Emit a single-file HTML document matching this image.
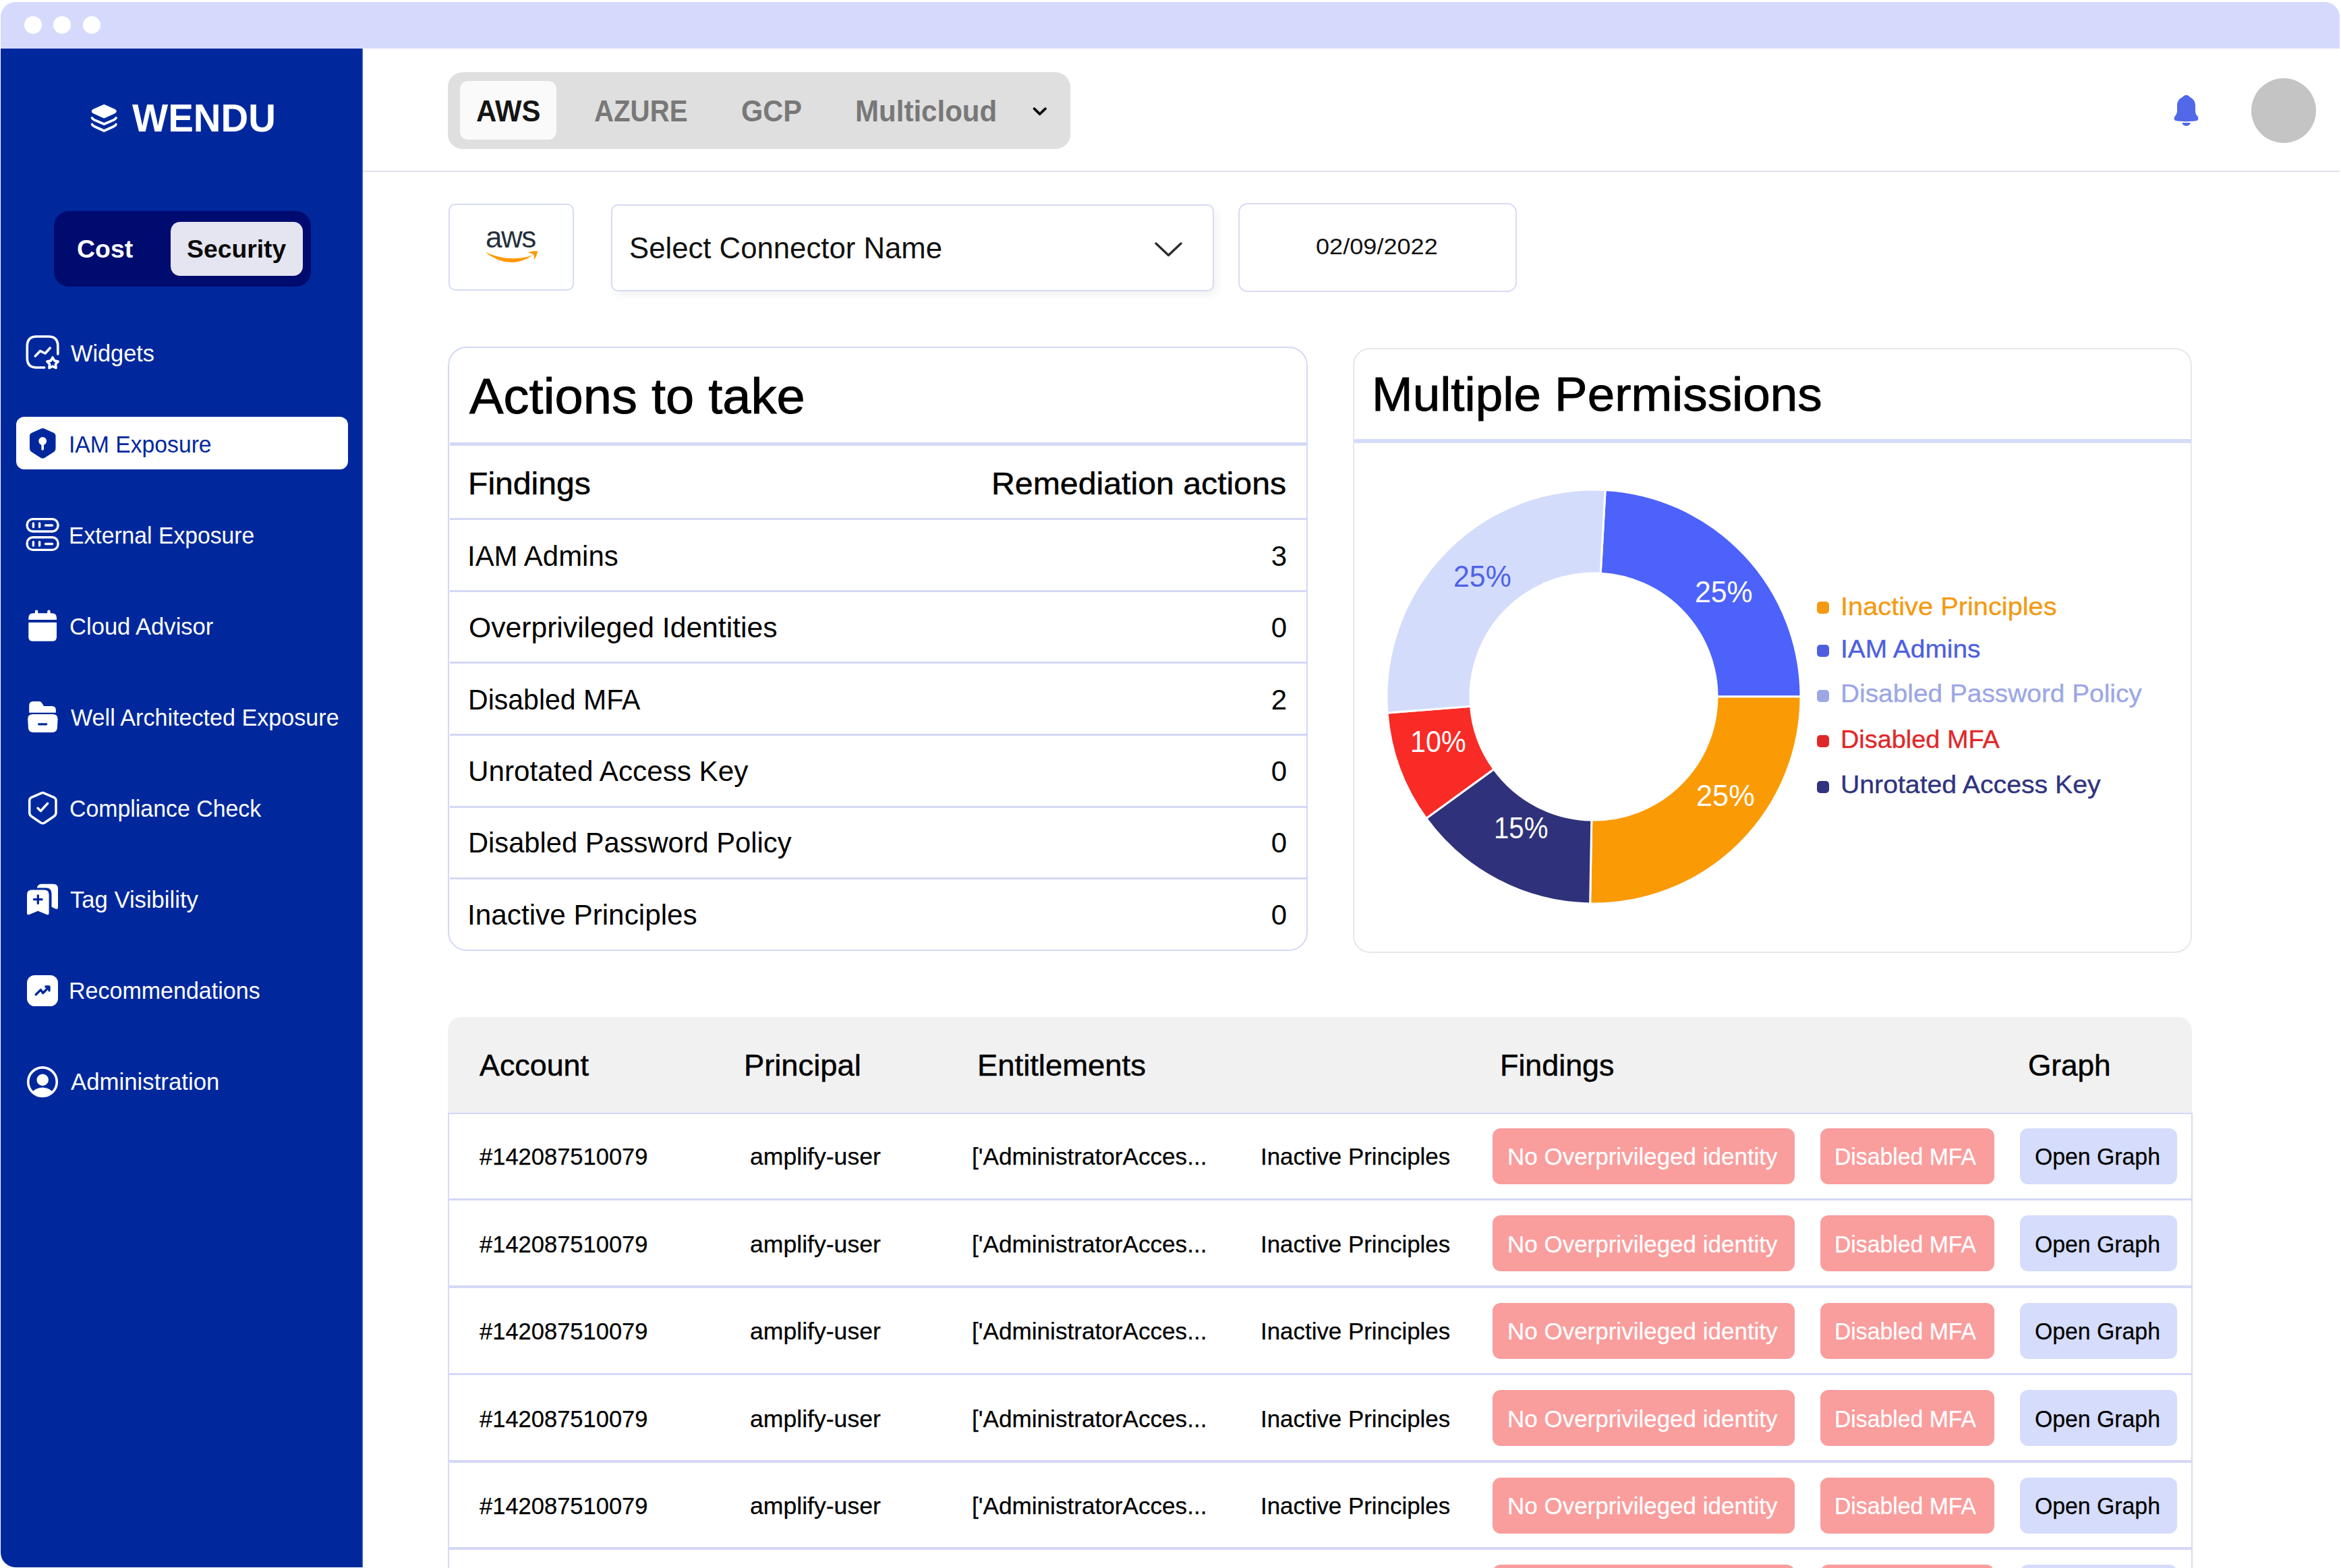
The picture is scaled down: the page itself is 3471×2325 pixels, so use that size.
<!DOCTYPE html>
<html><head><meta charset="utf-8"><title>Wendu IAM Exposure</title>
<style>
html,body{margin:0;padding:0;background:#fff;}
body{width:3471px;height:2325px;position:relative;overflow:hidden;font-family:"Liberation Sans", sans-serif;}
</style></head><body>
<div style="position:absolute;left:1px;top:3px;width:3468px;height:69px;background:#D5DAFD;border-radius:22px 22px 0 0;"></div>
<div style="position:absolute;left:36px;top:24px;width:26px;height:26px;border-radius:50%;background:#fff"></div>
<div style="position:absolute;left:79px;top:24px;width:26px;height:26px;border-radius:50%;background:#fff"></div>
<div style="position:absolute;left:123px;top:24px;width:26px;height:26px;border-radius:50%;background:#fff"></div>
<div style="position:absolute;left:1px;top:72px;width:537px;height:2252px;background:#00289C;border-radius:0 0 0 22px;box-shadow: inset -1.5px 0 0 #3A58B8;"></div>
<svg style="position:absolute;left:0;top:0" width="200" height="210" viewBox="0 0 200 210"><path d="M154.3 156.5 L169.5 163.2 Q172.8 165 169.5 166.8 L154.3 173.6 L139 166.8 Q135.8 165 139 163.2 Z" fill="#fff" stroke="#fff" stroke-width="3.4" stroke-linejoin="round"/><path d="M136.5 174.8 Q137.5 176.5 140 177.8 L154.3 184 L168.6 177.8 Q171 176.5 172 174.8" fill="none" stroke="#fff" stroke-width="3.6" stroke-linecap="round" stroke-linejoin="round"/><path d="M136.5 184.5 Q137.5 186.2 140 187.5 L154.3 194 L168.6 187.5 Q171 186.2 172 184.5" fill="none" stroke="#fff" stroke-width="3.6" stroke-linecap="round" stroke-linejoin="round"/></svg>
<div style="position:absolute;left:195.54px;top:146.00px;font-size:58px;line-height:58px;font-weight:bold;color:#fff;white-space:nowrap;transform:scaleX(0.9718);transform-origin:0 0;">WENDU</div>
<div style="position:absolute;left:80px;top:313px;width:381px;height:112px;background:#000B6F;border-radius:22px;"></div>
<div style="position:absolute;left:253px;top:329px;width:196px;height:80px;background:#E4E5F0;border-radius:14px;"></div>
<div style="position:absolute;left:114.07px;top:351.56px;font-size:36.2px;line-height:36.2px;font-weight:bold;color:#fff;white-space:nowrap;transform:scaleX(1.0342);transform-origin:0 0;">Cost</div>
<div style="position:absolute;left:276.92px;top:351.56px;font-size:36.2px;line-height:36.2px;font-weight:bold;color:#0A0A0A;white-space:nowrap;transform:scaleX(1.0310);transform-origin:0 0;">Security</div>
<div style="position:absolute;left:24px;top:618px;width:492px;height:78px;background:#fff;border-radius:12px;"></div>
<div style="position:absolute;left:104.83px;top:505.77px;font-size:35.0px;line-height:35.0px;font-weight:normal;color:#fff;white-space:nowrap;transform:scaleX(0.9809);transform-origin:0 0;">Widgets</div>
<div style="position:absolute;left:101.90px;top:640.77px;font-size:35.0px;line-height:35.0px;font-weight:normal;color:#00289C;white-space:nowrap;transform:scaleX(0.9626);transform-origin:0 0;">IAM Exposure</div>
<div style="position:absolute;left:102.24px;top:775.77px;font-size:35.0px;line-height:35.0px;font-weight:normal;color:#fff;white-space:nowrap;transform:scaleX(0.9624);transform-origin:0 0;">External Exposure</div>
<div style="position:absolute;left:103.24px;top:910.77px;font-size:35.0px;line-height:35.0px;font-weight:normal;color:#fff;white-space:nowrap;transform:scaleX(0.9880);transform-origin:0 0;">Cloud Advisor</div>
<div style="position:absolute;left:104.83px;top:1045.77px;font-size:35.0px;line-height:35.0px;font-weight:normal;color:#fff;white-space:nowrap;transform:scaleX(0.9749);transform-origin:0 0;">Well Architected Exposure</div>
<div style="position:absolute;left:103.27px;top:1180.77px;font-size:35.0px;line-height:35.0px;font-weight:normal;color:#fff;white-space:nowrap;transform:scaleX(0.9674);transform-origin:0 0;">Compliance Check</div>
<div style="position:absolute;left:104.24px;top:1315.77px;font-size:35.0px;line-height:35.0px;font-weight:normal;color:#fff;white-space:nowrap;transform:scaleX(0.9890);transform-origin:0 0;">Tag Visibility</div>
<div style="position:absolute;left:102.21px;top:1450.77px;font-size:35.0px;line-height:35.0px;font-weight:normal;color:#fff;white-space:nowrap;transform:scaleX(0.9720);transform-origin:0 0;">Recommendations</div>
<div style="position:absolute;left:104.93px;top:1585.77px;font-size:35.0px;line-height:35.0px;font-weight:normal;color:#fff;white-space:nowrap;transform:scaleX(0.9936);transform-origin:0 0;">Administration</div>
<svg style="position:absolute;left:0;top:0" width="540" height="1700" viewBox="0 0 540 1700">
<g fill="none" stroke="#fff" stroke-width="3.6" stroke-linecap="round" stroke-linejoin="round">
 <path d="M85.8 525 V513 Q85.8 499 71.8 499 H54.3 Q40.3 499 40.3 513 V531 Q40.3 545 54.3 545 H65.7"/>
 <path d="M52.3 528 L59.5 520.4 L67 524 L74.2 516"/>
 <path d="M78.00 530.00 L80.70 534.88 L86.18 535.94 L82.37 540.02 L83.05 545.56 L78.00 543.20 L72.95 545.56 L73.63 540.02 L69.82 535.94 L75.30 534.88 Z"/>
</g>
<path d="M63.3 635 Q64.5 635 66 635.8 L80 642 Q82.5 643.5 82.5 646 V665 Q82.5 668 80 670 L66 679 Q63.3 680.5 60.6 679 L46.6 670 Q44 668 44 665 V646 Q44 643.5 46.6 642 L60.6 635.8 Q62 635 63.3 635 Z" fill="#00289C"/>
<circle cx="63.2" cy="654" r="5.9" fill="#fff"/>
<path d="M63.2 657 V666" stroke="#fff" stroke-width="3.6" stroke-linecap="round"/>
<g fill="none" stroke="#fff" stroke-width="3.4" stroke-linecap="round">
 <rect x="40.2" y="769.6" width="45.8" height="18.4" rx="8.5"/>
 <rect x="40.2" y="796.8" width="45.8" height="18.6" rx="8.5"/>
 <path d="M49.4 776 V781.5 M58.6 776 V781.5 M67.5 779 H77.5"/>
 <path d="M49.4 803.5 V809 M58.6 803.5 V809 M67.5 806.5 H77.5"/>
</g>
<path d="M42.3 919 V916.3 Q42.3 909.3 49.3 909.3 H77 Q84 909.3 84 916.3 V919 Z" fill="#fff"/><rect x="51.9" y="904.6" width="4.4" height="8" rx="2.2" fill="#fff"/><rect x="70.2" y="904.6" width="4.4" height="8" rx="2.2" fill="#fff"/>
<path d="M42.3 923 H84 V944.5 Q84 950.8 77.7 950.8 H48.6 Q42.3 950.8 42.3 944.5 Z" fill="#fff"/>
<path d="M43.2 1056.8 V1046 Q43.2 1040 49.2 1040 H58 Q60.5 1040 62 1042.3 L65 1047 H77 Q82.9 1047 82.9 1053 V1056.8 Z" fill="#fff"/>
<path d="M48.5 1059 H78.3 Q85.6 1059 85.6 1066.3 L84.9 1079 Q84.5 1086 77.5 1086 H49.3 Q42.3 1086 41.9 1079 L41.2 1066.3 Q41.2 1059 48.5 1059 Z" fill="#fff"/>
<path d="M57.6 1073.8 H68.7" stroke="#00289C" stroke-width="3.2" stroke-linecap="round"/>
<g fill="none" stroke="#fff" stroke-width="3.5" stroke-linecap="round" stroke-linejoin="round">
 <path d="M63.3 1175.5 Q64.5 1175.5 66 1176.3 L80 1182.3 Q83 1184 83 1187 V1205 Q83 1208.5 80 1210.5 L66 1220 Q63.3 1221.6 60.6 1220 L46.6 1210.5 Q43.7 1208.5 43.7 1205 V1187 Q43.7 1184 46.6 1182.3 L60.6 1176.3 Q62 1175.5 63.3 1175.5 Z"/>
 <path d="M56 1198.3 L60.4 1202.5 L70.6 1191.3"/>
</g>
<path d="M54.8 1316.5 Q56 1310.7 62 1310.7 H79 Q86 1310.7 86 1317.7 V1345 Q86 1349 82 1347.5 L76.5 1344.7 V1325 Q76.5 1316.5 68 1316.5 Z" fill="#fff"/>
<path d="M47 1319.6 H65.6 Q72.6 1319.6 72.6 1326.6 V1353.5 Q72.6 1357.5 69 1356 L56.3 1350.7 L43.6 1356 Q40 1357.5 40 1353.5 V1326.6 Q40 1319.6 47 1319.6 Z" fill="#fff"/>
<path d="M56.3 1327.8 V1339.6 M50.4 1333.7 H62.2" stroke="#00289C" stroke-width="3.3" stroke-linecap="round"/>
<rect x="40" y="1446" width="46" height="46" rx="11.5" fill="#fff"/>
<path d="M53.2 1474.7 L60.4 1467.6 L63.7 1472.5 L72.9 1463 M67.8 1463 H73 V1468.8" fill="none" stroke="#00289C" stroke-width="3.4" stroke-linecap="round" stroke-linejoin="round"/>
<circle cx="63" cy="1604.2" r="21.3" fill="none" stroke="#fff" stroke-width="3.6"/>
<circle cx="63.2" cy="1601.2" r="8.7" fill="#fff"/>
<clipPath id="admclip"><circle cx="63" cy="1604.2" r="20"/></clipPath>
<circle cx="63" cy="1632.6" r="20.2" fill="#fff" clip-path="url(#admclip)"/>
</svg>
<div style="position:absolute;left:538px;top:253.2px;width:2931px;height:1.6000000000000227px;background:#E2E3F3;border-radius:0;"></div>
<div style="position:absolute;left:664px;top:107px;width:923px;height:114px;background:#DFDFDF;border-radius:22px;"></div>
<div style="position:absolute;left:682px;top:120px;width:143px;height:87px;background:#FAFAFA;border-radius:12px;"></div>
<div style="position:absolute;left:706.15px;top:142.88px;font-size:44.2px;line-height:44.2px;font-weight:bold;color:#151515;white-space:nowrap;transform:scaleX(0.9483);transform-origin:0 0;">AWS</div>
<div style="position:absolute;left:880.99px;top:142.88px;font-size:44.2px;line-height:44.2px;font-weight:bold;color:#787878;white-space:nowrap;transform:scaleX(0.9103);transform-origin:0 0;">AZURE</div>
<div style="position:absolute;left:1099.29px;top:142.88px;font-size:44.2px;line-height:44.2px;font-weight:bold;color:#787878;white-space:nowrap;transform:scaleX(0.9409);transform-origin:0 0;">GCP</div>
<div style="position:absolute;left:1268.18px;top:142.88px;font-size:44.2px;line-height:44.2px;font-weight:bold;color:#787878;white-space:nowrap;transform:scaleX(0.9518);transform-origin:0 0;">Multicloud</div>
<svg style="position:absolute;left:1525px;top:150px" width="32" height="30" viewBox="0 0 32 30"><path d="M8.5 11.2 L16.7 19.2 L25 11.2" fill="none" stroke="#0A0A0A" stroke-width="3.8" stroke-linecap="round" stroke-linejoin="round"/></svg>
<svg style="position:absolute;left:3220px;top:138px" width="44" height="52" viewBox="0 0 44 52"><path d="M21.6 3 C24.5 3 25.5 4.5 26.5 5.5 C32 8.5 35 12 35 19 V27 C35 30 36.5 32 38 34 C40 36.5 40 40 37 41 C30 42.5 13 42.5 6 41 C3 40 3 36.5 5 34 C6.5 32 8 30 8 27 V19 C8 12 11 8.5 16.5 5.5 C17.5 4.5 18.5 3 21.6 3 Z" fill="#5168E8"/><path d="M15.3 44 H28 C27 47.5 24.5 48.8 21.6 48.8 C18.7 48.8 16.3 47.5 15.3 44 Z" fill="#5168E8"/></svg>
<div style="position:absolute;left:3338px;top:116px;width:96px;height:96px;border-radius:50%;background:#C4C4C4"></div>
<div style="position:absolute;left:665px;top:302px;width:182px;height:125px;border:2px solid #D6DBF6;border-radius:10px;background:#fff"></div>
<div style="position:absolute;left:720px;top:329.9px;font-size:44px;line-height:44px;font-weight:normal;color:#252F3E;white-space:nowrap;letter-spacing:-1.5px;">aws</div>
<svg style="position:absolute;left:0;top:0" width="820" height="400" viewBox="0 0 820 400"><path d="M719 373.4 Q754.5 402 790 378.5 Q754.5 390 719 373.4 Z" fill="#FF9900"/><path d="M783 374.2 Q791 371.5 797.2 372.4 Q796 380 791.4 385.8 Q793 379 790.5 377 Q787 375.3 783 374.2 Z" fill="#FF9900"/></svg>
<div style="position:absolute;left:906px;top:303px;width:890px;height:125px;border:2px solid #D6DBF6;border-radius:10px;background:#fff;box-shadow:4px 6px 14px rgba(0,0,0,0.06)"></div>
<div style="position:absolute;left:932.89px;top:347.28px;font-size:43.5px;line-height:43.5px;font-weight:normal;color:#111;white-space:nowrap;transform:scaleX(1.0048);transform-origin:0 0;">Select Connector Name</div>
<svg style="position:absolute;left:1705px;top:352px" width="56" height="36" viewBox="0 0 56 36"><path d="M9 9 L27.5 26.5 L46 9" fill="none" stroke="#2C2C2C" stroke-width="3.4" stroke-linecap="round" stroke-linejoin="round"/></svg>
<div style="position:absolute;left:1836px;top:301px;width:409px;height:128px;border:2px solid #D9DAF8;border-radius:14px;background:#fff"></div>
<div style="position:absolute;left:1950.99px;top:349.10px;font-size:33.9px;line-height:33.9px;font-weight:normal;color:#111;white-space:nowrap;transform:scaleX(1.0657);transform-origin:0 0;">02/09/2022</div>
<div style="position:absolute;left:664px;top:514px;width:1271px;height:891.5px;border:2.5px solid #D2D8F5;border-radius:28px;background:#fff"></div>
<div style="position:absolute;left:666.5px;top:656px;width:1270.5px;height:5px;background:#D3D8F5;border-radius:0;"></div>
<div style="position:absolute;left:696.11px;top:550.91px;font-size:73.7px;line-height:73.7px;font-weight:normal;color:#000;white-space:nowrap;transform:scaleX(1.0297);transform-origin:0 0;-webkit-text-stroke:0.9px #000;">Actions to take</div>
<div style="position:absolute;left:693.61px;top:692.53px;font-size:47.1px;line-height:47.1px;font-weight:normal;color:#000;white-space:nowrap;transform:scaleX(1.0215);transform-origin:0 0;-webkit-text-stroke:0.5px #000;">Findings</div>
<div style="position:absolute;left:1470.30px;top:692.53px;font-size:47.1px;line-height:47.1px;font-weight:normal;color:#000;white-space:nowrap;transform:scaleX(1.0244);transform-origin:0 0;-webkit-text-stroke:0.5px #000;">Remediation actions</div>
<div style="position:absolute;left:666.5px;top:768px;width:1270.5px;height:2.5px;background:#D3D8F5;border-radius:0;"></div>
<div style="position:absolute;left:666.5px;top:875px;width:1270.5px;height:2.5px;background:#D3D8F5;border-radius:0;"></div>
<div style="position:absolute;left:666.5px;top:981px;width:1270.5px;height:2.5px;background:#D3D8F5;border-radius:0;"></div>
<div style="position:absolute;left:666.5px;top:1088px;width:1270.5px;height:2.5px;background:#D3D8F5;border-radius:0;"></div>
<div style="position:absolute;left:666.5px;top:1195px;width:1270.5px;height:2.5px;background:#D3D8F5;border-radius:0;"></div>
<div style="position:absolute;left:666.5px;top:1301px;width:1270.5px;height:2.5px;background:#D3D8F5;border-radius:0;"></div>
<div style="position:absolute;left:693.44px;top:803.85px;font-size:42.0px;line-height:42.0px;font-weight:normal;color:#000;white-space:nowrap;transform:scaleX(0.9982);transform-origin:0 0;">IAM Admins</div>
<div style="position:absolute;right:1563px;top:803.8px;font-size:42.0px;line-height:42.0px;font-weight:normal;color:#000;white-space:nowrap;">3</div>
<div style="position:absolute;left:695.00px;top:910.25px;font-size:42.0px;line-height:42.0px;font-weight:normal;color:#000;white-space:nowrap;transform:scaleX(1.0155);transform-origin:0 0;">Overprivileged Identities</div>
<div style="position:absolute;right:1563px;top:910.2px;font-size:42.0px;line-height:42.0px;font-weight:normal;color:#000;white-space:nowrap;">0</div>
<div style="position:absolute;left:693.64px;top:1016.65px;font-size:42.0px;line-height:42.0px;font-weight:normal;color:#000;white-space:nowrap;transform:scaleX(0.9770);transform-origin:0 0;">Disabled MFA</div>
<div style="position:absolute;right:1563px;top:1016.6px;font-size:42.0px;line-height:42.0px;font-weight:normal;color:#000;white-space:nowrap;">2</div>
<div style="position:absolute;left:693.75px;top:1123.05px;font-size:42.0px;line-height:42.0px;font-weight:normal;color:#000;white-space:nowrap;transform:scaleX(1.0052);transform-origin:0 0;">Unrotated Access Key</div>
<div style="position:absolute;right:1563px;top:1123.0px;font-size:42.0px;line-height:42.0px;font-weight:normal;color:#000;white-space:nowrap;">0</div>
<div style="position:absolute;left:693.58px;top:1229.45px;font-size:42.0px;line-height:42.0px;font-weight:normal;color:#000;white-space:nowrap;transform:scaleX(0.9923);transform-origin:0 0;">Disabled Password Policy</div>
<div style="position:absolute;right:1563px;top:1229.4px;font-size:42.0px;line-height:42.0px;font-weight:normal;color:#000;white-space:nowrap;">0</div>
<div style="position:absolute;left:693.41px;top:1335.85px;font-size:42.0px;line-height:42.0px;font-weight:normal;color:#000;white-space:nowrap;transform:scaleX(1.0066);transform-origin:0 0;">Inactive Principles</div>
<div style="position:absolute;right:1563px;top:1335.8px;font-size:42.0px;line-height:42.0px;font-weight:normal;color:#000;white-space:nowrap;">0</div>
<div style="position:absolute;left:2005.5px;top:515.5px;width:1240.5px;height:893.8px;border:2.5px solid #E7E7E7;border-radius:25px;background:#fff"></div>
<div style="position:absolute;left:2008px;top:651px;width:1240.5px;height:5.5px;background:#D6DCF7;border-radius:0;"></div>
<div style="position:absolute;left:2034.49px;top:549.11px;font-size:71.1px;line-height:71.1px;font-weight:normal;color:#000;white-space:nowrap;transform:scaleX(1.0241);transform-origin:0 0;-webkit-text-stroke:0.9px #000;">Multiple Permissions</div>
<svg style="position:absolute;left:0;top:0" width="3471" height="2325" viewBox="0 0 3471 2325"><path d="M2380.14 726.48 A307 307 0 0 1 2670.00 1033.00 L2546.00 1033.00 A183 183 0 0 0 2373.22 850.29 Z" fill="#4C62FB" stroke="#fff" stroke-width="3" stroke-linejoin="miter"/><path d="M2670.00 1033.00 A307 307 0 0 1 2357.64 1339.95 L2359.81 1215.97 A183 183 0 0 0 2546.00 1033.00 Z" fill="#FA9A05" stroke="#fff" stroke-width="3" stroke-linejoin="miter"/><path d="M2357.64 1339.95 A307 307 0 0 1 2114.63 1213.45 L2214.95 1140.56 A183 183 0 0 0 2359.81 1215.97 Z" fill="#2F327A" stroke="#fff" stroke-width="3" stroke-linejoin="miter"/><path d="M2114.63 1213.45 A307 307 0 0 1 2056.95 1057.09 L2180.56 1047.36 A183 183 0 0 0 2214.95 1140.56 Z" fill="#F82B26" stroke="#fff" stroke-width="3" stroke-linejoin="miter"/><path d="M2056.95 1057.09 A307 307 0 0 1 2380.14 726.48 L2373.22 850.29 A183 183 0 0 0 2180.56 1047.36 Z" fill="#D4DCFB" stroke="#fff" stroke-width="3" stroke-linejoin="miter"/></svg>
<div style="position:absolute;left:2154.76px;top:832.18px;font-size:44.8px;line-height:44.8px;font-weight:normal;color:#4F62E8;white-space:nowrap;transform:scaleX(0.9565);transform-origin:0 0;">25%</div>
<div style="position:absolute;left:2512.86px;top:854.68px;font-size:44.8px;line-height:44.8px;font-weight:normal;color:#fff;white-space:nowrap;transform:scaleX(0.9553);transform-origin:0 0;">25%</div>
<div style="position:absolute;left:2514.83px;top:1156.68px;font-size:44.8px;line-height:44.8px;font-weight:normal;color:#fff;white-space:nowrap;transform:scaleX(0.9670);transform-origin:0 0;">25%</div>
<div style="position:absolute;left:2214.94px;top:1204.68px;font-size:44.8px;line-height:44.8px;font-weight:normal;color:#fff;white-space:nowrap;transform:scaleX(0.8976);transform-origin:0 0;">15%</div>
<div style="position:absolute;left:2090.86px;top:1076.68px;font-size:44.8px;line-height:44.8px;font-weight:normal;color:#fff;white-space:nowrap;transform:scaleX(0.9212);transform-origin:0 0;">10%</div>
<div style="position:absolute;left:2694px;top:892px;width:18px;height:18px;border-radius:5px;background:#F39A12"></div>
<div style="position:absolute;left:2728.53px;top:881.86px;font-size:36.9px;line-height:36.9px;font-weight:normal;color:#F39A12;white-space:nowrap;transform:scaleX(1.0785);transform-origin:0 0;-webkit-text-stroke:0.35px #F39A12;">Inactive Principles</div>
<div style="position:absolute;left:2694px;top:956px;width:18px;height:18px;border-radius:5px;background:#4D5FE0"></div>
<div style="position:absolute;left:2728.60px;top:945.36px;font-size:36.9px;line-height:36.9px;font-weight:normal;color:#4D5FE0;white-space:nowrap;transform:scaleX(1.0546);transform-origin:0 0;-webkit-text-stroke:0.35px #4D5FE0;">IAM Admins</div>
<div style="position:absolute;left:2694px;top:1023px;width:18px;height:18px;border-radius:5px;background:#9CA7E6"></div>
<div style="position:absolute;left:2729.00px;top:1011.06px;font-size:36.9px;line-height:36.9px;font-weight:normal;color:#9CA7E6;white-space:nowrap;transform:scaleX(1.0527);transform-origin:0 0;-webkit-text-stroke:0.35px #9CA7E6;">Disabled Password Policy</div>
<div style="position:absolute;left:2694px;top:1090px;width:18px;height:18px;border-radius:5px;background:#E0282A"></div>
<div style="position:absolute;left:2729.07px;top:1079.06px;font-size:36.9px;line-height:36.9px;font-weight:normal;color:#E0282A;white-space:nowrap;transform:scaleX(1.0266);transform-origin:0 0;-webkit-text-stroke:0.35px #E0282A;">Disabled MFA</div>
<div style="position:absolute;left:2694px;top:1158px;width:18px;height:18px;border-radius:5px;background:#2F3380"></div>
<div style="position:absolute;left:2729.17px;top:1146.36px;font-size:36.9px;line-height:36.9px;font-weight:normal;color:#2F3380;white-space:nowrap;transform:scaleX(1.0625);transform-origin:0 0;-webkit-text-stroke:0.35px #2F3380;">Unrotated Access Key</div>
<div style="position:absolute;left:664px;top:1508px;width:2586px;height:142px;background:#F1F1F1;border-radius:20px 20px 0 0"></div>
<div style="position:absolute;left:664.3px;top:1650px;width:2586.7px;height:2.2000000000000455px;background:#D3D8F5;border-radius:0;"></div>
<div style="position:absolute;left:664.3px;top:1650px;width:1.900000000000091px;height:675px;background:#D6DBF8;border-radius:0;"></div>
<div style="position:absolute;left:3249px;top:1650px;width:2px;height:675px;background:#D8DAEE;border-radius:0;"></div>
<div style="position:absolute;left:711.06px;top:1557.80px;font-size:44.3px;line-height:44.3px;font-weight:normal;color:#000;white-space:nowrap;transform:scaleX(1.0121);transform-origin:0 0;-webkit-text-stroke:0.5px #000;">Account</div>
<div style="position:absolute;left:1102.54px;top:1557.80px;font-size:44.3px;line-height:44.3px;font-weight:normal;color:#000;white-space:nowrap;transform:scaleX(1.0227);transform-origin:0 0;-webkit-text-stroke:0.5px #000;">Principal</div>
<div style="position:absolute;left:1448.53px;top:1557.80px;font-size:44.3px;line-height:44.3px;font-weight:normal;color:#000;white-space:nowrap;transform:scaleX(1.0251);transform-origin:0 0;-webkit-text-stroke:0.5px #000;">Entitlements</div>
<div style="position:absolute;left:2223.58px;top:1557.80px;font-size:44.3px;line-height:44.3px;font-weight:normal;color:#000;white-space:nowrap;transform:scaleX(1.0121);transform-origin:0 0;-webkit-text-stroke:0.5px #000;">Findings</div>
<div style="position:absolute;left:3007.04px;top:1557.80px;font-size:44.3px;line-height:44.3px;font-weight:normal;color:#000;white-space:nowrap;transform:scaleX(0.9957);transform-origin:0 0;-webkit-text-stroke:0.5px #000;">Graph</div>
<div style="position:absolute;left:666.2px;top:1776.7px;width:2582.8px;height:3.7999999999999545px;background:#D3D8F5;border-radius:0;"></div>
<div style="position:absolute;left:666.2px;top:1906.1000000000001px;width:2582.8px;height:3.7999999999999545px;background:#D3D8F5;border-radius:0;"></div>
<div style="position:absolute;left:666.2px;top:2035.5px;width:2582.8px;height:3.7999999999999545px;background:#D3D8F5;border-radius:0;"></div>
<div style="position:absolute;left:666.2px;top:2164.8999999999996px;width:2582.8px;height:3.800000000000182px;background:#D3D8F5;border-radius:0;"></div>
<div style="position:absolute;left:666.2px;top:2294.2999999999997px;width:2582.8px;height:3.800000000000182px;background:#D3D8F5;border-radius:0;"></div>
<div style="position:absolute;left:710.99px;top:1698.40px;font-size:34.5px;line-height:34.5px;font-weight:normal;color:#000;white-space:nowrap;transform:scaleX(1.0003);transform-origin:0 0;-webkit-text-stroke:0.25px #000;">#142087510079</div>
<div style="position:absolute;left:1111.63px;top:1698.40px;font-size:34.5px;line-height:34.5px;font-weight:normal;color:#000;white-space:nowrap;transform:scaleX(1.0317);transform-origin:0 0;-webkit-text-stroke:0.25px #000;">amplify-user</div>
<div style="position:absolute;left:1440.63px;top:1698.40px;font-size:34.5px;line-height:34.5px;font-weight:normal;color:#000;white-space:nowrap;transform:scaleX(1.0185);transform-origin:0 0;-webkit-text-stroke:0.25px #000;">['AdministratorAcces...</div>
<div style="position:absolute;left:1868.92px;top:1698.40px;font-size:34.5px;line-height:34.5px;font-weight:normal;color:#000;white-space:nowrap;transform:scaleX(1.0114);transform-origin:0 0;-webkit-text-stroke:0.25px #000;">Inactive Principles</div>
<div style="position:absolute;left:2213px;top:1673px;width:448px;height:83px;background:#FA9D9D;border-radius:12px;"></div>
<div style="position:absolute;left:2235.36px;top:1698.40px;font-size:34.5px;line-height:34.5px;font-weight:normal;color:#fff;white-space:nowrap;transform:scaleX(1.0141);transform-origin:0 0;-webkit-text-stroke:0.25px #fff;">No Overprivileged identity</div>
<div style="position:absolute;left:2699px;top:1673px;width:258px;height:83px;background:#FA9D9D;border-radius:12px;"></div>
<div style="position:absolute;left:2719.85px;top:1698.40px;font-size:34.5px;line-height:34.5px;font-weight:normal;color:#fff;white-space:nowrap;transform:scaleX(0.9782);transform-origin:0 0;-webkit-text-stroke:0.25px #fff;">Disabled MFA</div>
<div style="position:absolute;left:2995px;top:1673px;width:233px;height:83px;background:#D5DCFC;border-radius:12px;"></div>
<div style="position:absolute;left:3017.13px;top:1698.40px;font-size:34.5px;line-height:34.5px;font-weight:normal;color:#000;white-space:nowrap;transform:scaleX(0.9794);transform-origin:0 0;-webkit-text-stroke:0.25px #000;">Open Graph</div>
<div style="position:absolute;left:710.99px;top:1827.80px;font-size:34.5px;line-height:34.5px;font-weight:normal;color:#000;white-space:nowrap;transform:scaleX(1.0003);transform-origin:0 0;-webkit-text-stroke:0.25px #000;">#142087510079</div>
<div style="position:absolute;left:1111.63px;top:1827.80px;font-size:34.5px;line-height:34.5px;font-weight:normal;color:#000;white-space:nowrap;transform:scaleX(1.0317);transform-origin:0 0;-webkit-text-stroke:0.25px #000;">amplify-user</div>
<div style="position:absolute;left:1440.63px;top:1827.80px;font-size:34.5px;line-height:34.5px;font-weight:normal;color:#000;white-space:nowrap;transform:scaleX(1.0185);transform-origin:0 0;-webkit-text-stroke:0.25px #000;">['AdministratorAcces...</div>
<div style="position:absolute;left:1868.92px;top:1827.80px;font-size:34.5px;line-height:34.5px;font-weight:normal;color:#000;white-space:nowrap;transform:scaleX(1.0114);transform-origin:0 0;-webkit-text-stroke:0.25px #000;">Inactive Principles</div>
<div style="position:absolute;left:2213px;top:1802px;width:448px;height:83px;background:#FA9D9D;border-radius:12px;"></div>
<div style="position:absolute;left:2235.36px;top:1827.80px;font-size:34.5px;line-height:34.5px;font-weight:normal;color:#fff;white-space:nowrap;transform:scaleX(1.0141);transform-origin:0 0;-webkit-text-stroke:0.25px #fff;">No Overprivileged identity</div>
<div style="position:absolute;left:2699px;top:1802px;width:258px;height:83px;background:#FA9D9D;border-radius:12px;"></div>
<div style="position:absolute;left:2719.85px;top:1827.80px;font-size:34.5px;line-height:34.5px;font-weight:normal;color:#fff;white-space:nowrap;transform:scaleX(0.9782);transform-origin:0 0;-webkit-text-stroke:0.25px #fff;">Disabled MFA</div>
<div style="position:absolute;left:2995px;top:1802px;width:233px;height:83px;background:#D5DCFC;border-radius:12px;"></div>
<div style="position:absolute;left:3017.13px;top:1827.80px;font-size:34.5px;line-height:34.5px;font-weight:normal;color:#000;white-space:nowrap;transform:scaleX(0.9794);transform-origin:0 0;-webkit-text-stroke:0.25px #000;">Open Graph</div>
<div style="position:absolute;left:710.99px;top:1957.20px;font-size:34.5px;line-height:34.5px;font-weight:normal;color:#000;white-space:nowrap;transform:scaleX(1.0003);transform-origin:0 0;-webkit-text-stroke:0.25px #000;">#142087510079</div>
<div style="position:absolute;left:1111.63px;top:1957.20px;font-size:34.5px;line-height:34.5px;font-weight:normal;color:#000;white-space:nowrap;transform:scaleX(1.0317);transform-origin:0 0;-webkit-text-stroke:0.25px #000;">amplify-user</div>
<div style="position:absolute;left:1440.63px;top:1957.20px;font-size:34.5px;line-height:34.5px;font-weight:normal;color:#000;white-space:nowrap;transform:scaleX(1.0185);transform-origin:0 0;-webkit-text-stroke:0.25px #000;">['AdministratorAcces...</div>
<div style="position:absolute;left:1868.92px;top:1957.20px;font-size:34.5px;line-height:34.5px;font-weight:normal;color:#000;white-space:nowrap;transform:scaleX(1.0114);transform-origin:0 0;-webkit-text-stroke:0.25px #000;">Inactive Principles</div>
<div style="position:absolute;left:2213px;top:1932px;width:448px;height:83px;background:#FA9D9D;border-radius:12px;"></div>
<div style="position:absolute;left:2235.36px;top:1957.20px;font-size:34.5px;line-height:34.5px;font-weight:normal;color:#fff;white-space:nowrap;transform:scaleX(1.0141);transform-origin:0 0;-webkit-text-stroke:0.25px #fff;">No Overprivileged identity</div>
<div style="position:absolute;left:2699px;top:1932px;width:258px;height:83px;background:#FA9D9D;border-radius:12px;"></div>
<div style="position:absolute;left:2719.85px;top:1957.20px;font-size:34.5px;line-height:34.5px;font-weight:normal;color:#fff;white-space:nowrap;transform:scaleX(0.9782);transform-origin:0 0;-webkit-text-stroke:0.25px #fff;">Disabled MFA</div>
<div style="position:absolute;left:2995px;top:1932px;width:233px;height:83px;background:#D5DCFC;border-radius:12px;"></div>
<div style="position:absolute;left:3017.13px;top:1957.20px;font-size:34.5px;line-height:34.5px;font-weight:normal;color:#000;white-space:nowrap;transform:scaleX(0.9794);transform-origin:0 0;-webkit-text-stroke:0.25px #000;">Open Graph</div>
<div style="position:absolute;left:710.99px;top:2086.60px;font-size:34.5px;line-height:34.5px;font-weight:normal;color:#000;white-space:nowrap;transform:scaleX(1.0003);transform-origin:0 0;-webkit-text-stroke:0.25px #000;">#142087510079</div>
<div style="position:absolute;left:1111.63px;top:2086.60px;font-size:34.5px;line-height:34.5px;font-weight:normal;color:#000;white-space:nowrap;transform:scaleX(1.0317);transform-origin:0 0;-webkit-text-stroke:0.25px #000;">amplify-user</div>
<div style="position:absolute;left:1440.63px;top:2086.60px;font-size:34.5px;line-height:34.5px;font-weight:normal;color:#000;white-space:nowrap;transform:scaleX(1.0185);transform-origin:0 0;-webkit-text-stroke:0.25px #000;">['AdministratorAcces...</div>
<div style="position:absolute;left:1868.92px;top:2086.60px;font-size:34.5px;line-height:34.5px;font-weight:normal;color:#000;white-space:nowrap;transform:scaleX(1.0114);transform-origin:0 0;-webkit-text-stroke:0.25px #000;">Inactive Principles</div>
<div style="position:absolute;left:2213px;top:2061px;width:448px;height:83px;background:#FA9D9D;border-radius:12px;"></div>
<div style="position:absolute;left:2235.36px;top:2086.60px;font-size:34.5px;line-height:34.5px;font-weight:normal;color:#fff;white-space:nowrap;transform:scaleX(1.0141);transform-origin:0 0;-webkit-text-stroke:0.25px #fff;">No Overprivileged identity</div>
<div style="position:absolute;left:2699px;top:2061px;width:258px;height:83px;background:#FA9D9D;border-radius:12px;"></div>
<div style="position:absolute;left:2719.85px;top:2086.60px;font-size:34.5px;line-height:34.5px;font-weight:normal;color:#fff;white-space:nowrap;transform:scaleX(0.9782);transform-origin:0 0;-webkit-text-stroke:0.25px #fff;">Disabled MFA</div>
<div style="position:absolute;left:2995px;top:2061px;width:233px;height:83px;background:#D5DCFC;border-radius:12px;"></div>
<div style="position:absolute;left:3017.13px;top:2086.60px;font-size:34.5px;line-height:34.5px;font-weight:normal;color:#000;white-space:nowrap;transform:scaleX(0.9794);transform-origin:0 0;-webkit-text-stroke:0.25px #000;">Open Graph</div>
<div style="position:absolute;left:710.99px;top:2216.00px;font-size:34.5px;line-height:34.5px;font-weight:normal;color:#000;white-space:nowrap;transform:scaleX(1.0003);transform-origin:0 0;-webkit-text-stroke:0.25px #000;">#142087510079</div>
<div style="position:absolute;left:1111.63px;top:2216.00px;font-size:34.5px;line-height:34.5px;font-weight:normal;color:#000;white-space:nowrap;transform:scaleX(1.0317);transform-origin:0 0;-webkit-text-stroke:0.25px #000;">amplify-user</div>
<div style="position:absolute;left:1440.63px;top:2216.00px;font-size:34.5px;line-height:34.5px;font-weight:normal;color:#000;white-space:nowrap;transform:scaleX(1.0185);transform-origin:0 0;-webkit-text-stroke:0.25px #000;">['AdministratorAcces...</div>
<div style="position:absolute;left:1868.92px;top:2216.00px;font-size:34.5px;line-height:34.5px;font-weight:normal;color:#000;white-space:nowrap;transform:scaleX(1.0114);transform-origin:0 0;-webkit-text-stroke:0.25px #000;">Inactive Principles</div>
<div style="position:absolute;left:2213px;top:2191px;width:448px;height:83px;background:#FA9D9D;border-radius:12px;"></div>
<div style="position:absolute;left:2235.36px;top:2216.00px;font-size:34.5px;line-height:34.5px;font-weight:normal;color:#fff;white-space:nowrap;transform:scaleX(1.0141);transform-origin:0 0;-webkit-text-stroke:0.25px #fff;">No Overprivileged identity</div>
<div style="position:absolute;left:2699px;top:2191px;width:258px;height:83px;background:#FA9D9D;border-radius:12px;"></div>
<div style="position:absolute;left:2719.85px;top:2216.00px;font-size:34.5px;line-height:34.5px;font-weight:normal;color:#fff;white-space:nowrap;transform:scaleX(0.9782);transform-origin:0 0;-webkit-text-stroke:0.25px #fff;">Disabled MFA</div>
<div style="position:absolute;left:2995px;top:2191px;width:233px;height:83px;background:#D5DCFC;border-radius:12px;"></div>
<div style="position:absolute;left:3017.13px;top:2216.00px;font-size:34.5px;line-height:34.5px;font-weight:normal;color:#000;white-space:nowrap;transform:scaleX(0.9794);transform-origin:0 0;-webkit-text-stroke:0.25px #000;">Open Graph</div>
<div style="position:absolute;left:710.99px;top:2345.40px;font-size:34.5px;line-height:34.5px;font-weight:normal;color:#000;white-space:nowrap;transform:scaleX(1.0003);transform-origin:0 0;-webkit-text-stroke:0.25px #000;">#142087510079</div>
<div style="position:absolute;left:1111.63px;top:2345.40px;font-size:34.5px;line-height:34.5px;font-weight:normal;color:#000;white-space:nowrap;transform:scaleX(1.0317);transform-origin:0 0;-webkit-text-stroke:0.25px #000;">amplify-user</div>
<div style="position:absolute;left:1440.63px;top:2345.40px;font-size:34.5px;line-height:34.5px;font-weight:normal;color:#000;white-space:nowrap;transform:scaleX(1.0185);transform-origin:0 0;-webkit-text-stroke:0.25px #000;">['AdministratorAcces...</div>
<div style="position:absolute;left:1868.92px;top:2345.40px;font-size:34.5px;line-height:34.5px;font-weight:normal;color:#000;white-space:nowrap;transform:scaleX(1.0114);transform-origin:0 0;-webkit-text-stroke:0.25px #000;">Inactive Principles</div>
<div style="position:absolute;left:2213px;top:2320px;width:448px;height:83px;background:#FA9D9D;border-radius:12px;"></div>
<div style="position:absolute;left:2235.36px;top:2345.40px;font-size:34.5px;line-height:34.5px;font-weight:normal;color:#fff;white-space:nowrap;transform:scaleX(1.0141);transform-origin:0 0;-webkit-text-stroke:0.25px #fff;">No Overprivileged identity</div>
<div style="position:absolute;left:2699px;top:2320px;width:258px;height:83px;background:#FA9D9D;border-radius:12px;"></div>
<div style="position:absolute;left:2719.85px;top:2345.40px;font-size:34.5px;line-height:34.5px;font-weight:normal;color:#fff;white-space:nowrap;transform:scaleX(0.9782);transform-origin:0 0;-webkit-text-stroke:0.25px #fff;">Disabled MFA</div>
<div style="position:absolute;left:2995px;top:2320px;width:233px;height:83px;background:#D5DCFC;border-radius:12px;"></div>
<div style="position:absolute;left:3017.13px;top:2345.40px;font-size:34.5px;line-height:34.5px;font-weight:normal;color:#000;white-space:nowrap;transform:scaleX(0.9794);transform-origin:0 0;-webkit-text-stroke:0.25px #000;">Open Graph</div>
</body></html>
